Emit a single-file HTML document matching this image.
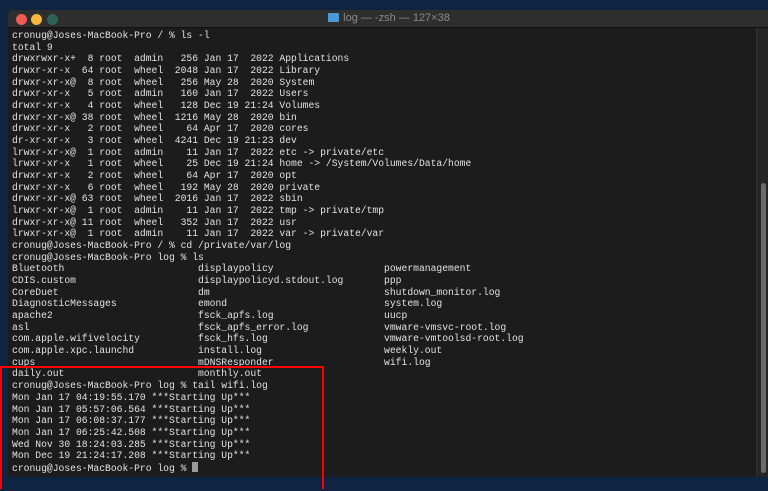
<!DOCTYPE html>
<html><head><meta charset="utf-8"><style>
html,body{margin:0;padding:0;width:768px;height:491px;overflow:hidden;background:#0e2440;}
.win{position:absolute;left:8px;top:10px;width:762px;height:467px;background:#1c1c1c;border-radius:5px 5px 0 0;overflow:hidden;}
.tb{position:absolute;left:0;top:0;right:0;height:17px;background:#2e2e2e;border-bottom:1px solid #111;}
.dot{position:absolute;top:4px;width:11px;height:11px;border-radius:50%;}
.title{position:absolute;left:0;right:0;top:2px;text-align:center;font:11px "Liberation Sans",sans-serif;color:#8a8a8a;}
.fold{display:inline-block;width:11px;height:9px;background:#4a9ad8;vertical-align:-1px;margin-right:4px;border-radius:1px;}
pre{position:absolute;left:4px;top:20px;margin:0;font:9.7px/11.67px "Liberation Mono",monospace;color:#e2e2e2;white-space:pre;}
.sb{position:absolute;right:0;top:18px;width:13px;bottom:0;background:#262626;border-left:1px solid #333;}
.th{position:absolute;left:4px;width:5px;top:155px;bottom:4px;background:#6a6a6a;border-radius:3px;}
.red{position:absolute;left:0;top:366px;width:320px;height:121px;border:2px solid #f00;border-bottom:none;}
.cur{display:inline-block;width:6px;height:10px;background:#9a9a9a;vertical-align:-1px;}
</style></head><body>
<div class="win">
<div class="tb">
<div class="dot" style="left:8px;background:#ee5b52"></div>
<div class="dot" style="left:23px;background:#f4b73b"></div>
<div class="dot" style="left:39px;background:#2e6158"></div>
<div class="title"><span class="fold"></span>log — -zsh — 127×38</div>
</div>
<pre>cronug@Joses-MacBook-Pro / % ls -l
total 9
drwxrwxr-x+  8 root  admin   256 Jan 17  2022 Applications
drwxr-xr-x  64 root  wheel  2048 Jan 17  2022 Library
drwxr-xr-x@  8 root  wheel   256 May 28  2020 System
drwxr-xr-x   5 root  admin   160 Jan 17  2022 Users
drwxr-xr-x   4 root  wheel   128 Dec 19 21:24 Volumes
drwxr-xr-x@ 38 root  wheel  1216 May 28  2020 bin
drwxr-xr-x   2 root  wheel    64 Apr 17  2020 cores
dr-xr-xr-x   3 root  wheel  4241 Dec 19 21:23 dev
lrwxr-xr-x@  1 root  admin    11 Jan 17  2022 etc -> private/etc
lrwxr-xr-x   1 root  wheel    25 Dec 19 21:24 home -> /System/Volumes/Data/home
drwxr-xr-x   2 root  wheel    64 Apr 17  2020 opt
drwxr-xr-x   6 root  wheel   192 May 28  2020 private
drwxr-xr-x@ 63 root  wheel  2016 Jan 17  2022 sbin
lrwxr-xr-x@  1 root  admin    11 Jan 17  2022 tmp -> private/tmp
drwxr-xr-x@ 11 root  wheel   352 Jan 17  2022 usr
lrwxr-xr-x@  1 root  admin    11 Jan 17  2022 var -> private/var
cronug@Joses-MacBook-Pro / % cd /private/var/log
cronug@Joses-MacBook-Pro log % ls
Bluetooth                       displaypolicy                   powermanagement
CDIS.custom                     displaypolicyd.stdout.log       ppp
CoreDuet                        dm                              shutdown_monitor.log
DiagnosticMessages              emond                           system.log
apache2                         fsck_apfs.log                   uucp
asl                             fsck_apfs_error.log             vmware-vmsvc-root.log
com.apple.wifivelocity          fsck_hfs.log                    vmware-vmtoolsd-root.log
com.apple.xpc.launchd           install.log                     weekly.out
cups                            mDNSResponder                   wifi.log
daily.out                       monthly.out
cronug@Joses-MacBook-Pro log % tail wifi.log
Mon Jan 17 04:19:55.170 ***Starting Up***
Mon Jan 17 05:57:06.564 ***Starting Up***
Mon Jan 17 06:08:37.177 ***Starting Up***
Mon Jan 17 06:25:42.508 ***Starting Up***
Wed Nov 30 18:24:03.285 ***Starting Up***
Mon Dec 19 21:24:17.208 ***Starting Up***
cronug@Joses-MacBook-Pro log % <span class="cur"></span></pre>
<div class="sb"><div class="th"></div></div>
</div>
<div class="red"></div>
</body></html>
